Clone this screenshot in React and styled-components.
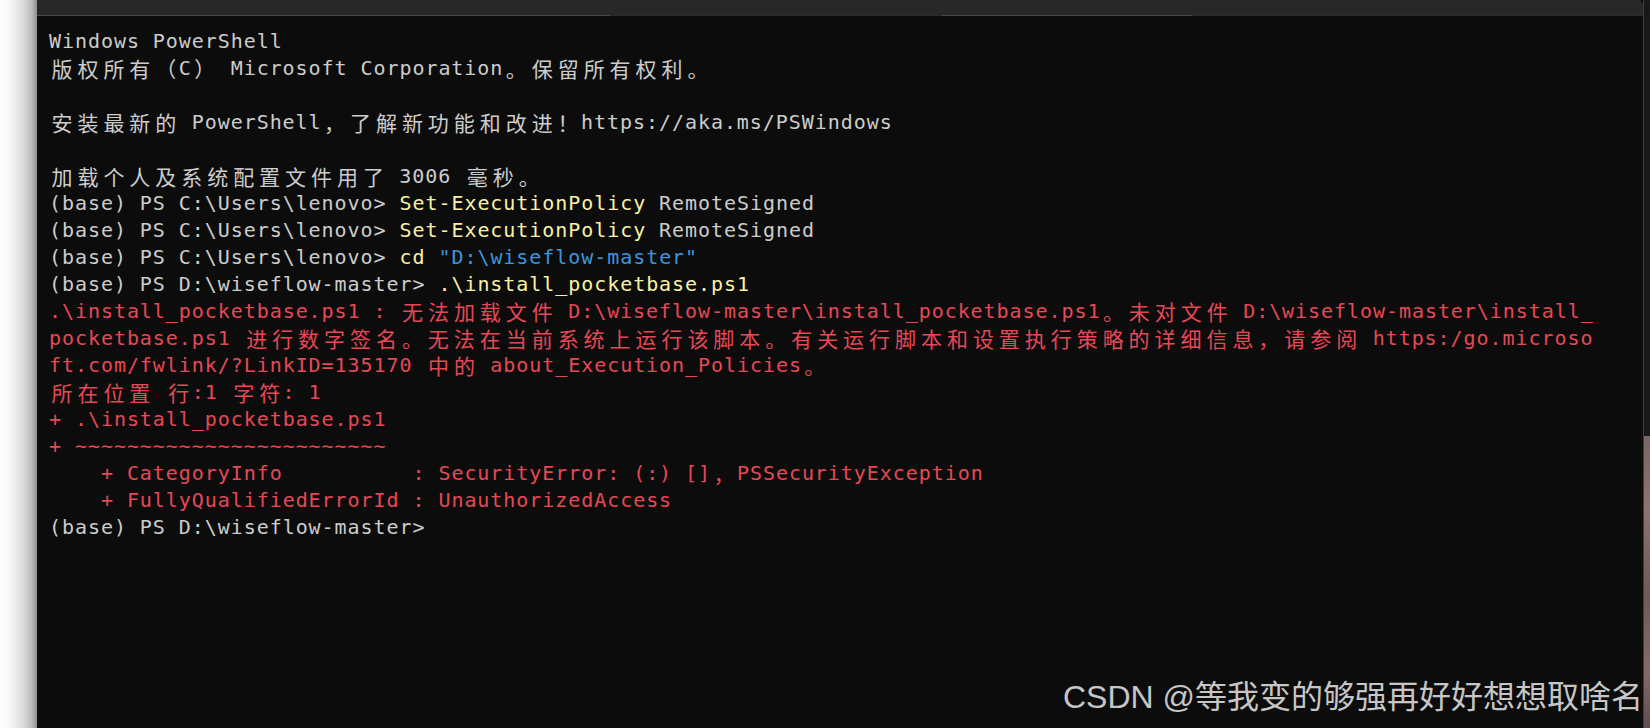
import React from 'react';
import styled, { createGlobalStyle } from 'styled-components';

const CELL = 12.98;
const LINE = 27.05;

const palette = {
  fg: '#cccccc',
  cmd: '#f9f1a5',
  str: '#3a96dd',
  err: '#e74856',
};

const Global = createGlobalStyle`
  html, body { margin: 0; padding: 0; background: #0c0c0c; }
  body { width: 1650px; height: 728px; overflow: hidden; }
`;

const Page = styled.div`
  display: flex;
  width: 1650px;
  height: 728px;
  overflow: hidden;
`;

const Backdrop = styled.div`
  flex: 0 0 37px;
  background: linear-gradient(
    to right,
    #ffffff 0px,
    #f7f7f7 10px,
    #dcdcdc 23px,
    #b9b9b9 32px,
    #8f8f8f 37px
  );
`;

const Window = styled.section`
  position: relative;
  flex: 1;
  min-width: 0;
  display: flex;
  flex-direction: column;
  background: #0c0c0c;
`;

const TitleBar = styled.div`
  height: 15px;
  background: #282828;
  border-top-right-radius: 5px;
`;

const TabRule = styled.div`
  display: flex;
  height: 1px;
  background: #2c2c2c;
`;

const RuleSeg = styled.span`
  flex: 0 0 ${(p) => p.$w}px;
  background: ${(p) => (p.$lit ? '#4a4a4a' : 'transparent')};
`;

const Console = styled.pre`
  margin: 0;
  padding: 11.5px 0 0 12px;
  font-family: 'DejaVu Sans Mono', 'Liberation Mono', monospace;
  font-size: 20px;
  letter-spacing: ${CELL - 20 * 0.602}px;
  color: ${palette.fg};
  white-space: pre;
`;

const Line = styled.div`
  height: ${LINE}px;
  line-height: ${LINE}px;
`;

const Tone = styled.span`
  color: ${(p) => palette[p.$tone] || palette.fg};
`;

const Wide = styled.span`
  display: inline-block;
  width: ${CELL * 2}px;
  text-align: center;
  font-family: 'Noto Sans CJK SC', 'Noto Sans CJK JP', sans-serif;
  font-size: 21px;
  letter-spacing: 0;
  line-height: 20px;
  vertical-align: -2px;
`;

const Watermark = styled.div`
  position: absolute;
  right: 0;
  bottom: 15px;
  font-family: 'Liberation Sans', 'Noto Sans CJK SC', sans-serif;
  font-size: 32px;
  line-height: 32px;
  color: #c6c6c6;
  white-space: nowrap;
`;

const Edge = styled.aside`
  flex: 0 0 7px;
  display: flex;
  flex-direction: column;
  border-left: 1px solid #3c3c3c;
  box-sizing: border-box;
`;

const EdgeTop = styled.div`
  flex: 0 0 436px;
  background: #181818;
`;

const EdgePhoto = styled.div`
  flex: 1;
  background: linear-gradient(
    180deg,
    #7a6464 0%,
    #8c7373 25%,
    #6e5858 55%,
    #846b6b 80%,
    #5f4c4c 100%
  );
`;

const WIDE_RE = /[\u1100-\u115f\u2e80-\u303f\u3040-\ua4cf\uac00-\ud7a3\uf900-\ufaff\ufe30-\ufe4f\uff00-\uff60\uffe0-\uffe6]/;

function renderCells(text) {
  const out = [];
  let buf = '';
  let k = 0;
  for (const ch of text) {
    if (WIDE_RE.test(ch)) {
      if (buf) {
        out.push(buf);
        buf = '';
      }
      out.push(<Wide key={k++}>{ch}</Wide>);
    } else {
      buf += ch;
    }
  }
  if (buf) out.push(buf);
  return out;
}

const PROMPT_C = '(base) PS C:\\Users\\lenovo> ';
const PROMPT_D = '(base) PS D:\\wiseflow-master> ';

const lines = [
  [['Windows PowerShell']],
  [['版权所有（C） Microsoft Corporation。保留所有权利。']],
  [],
  [['安装最新的 PowerShell，了解新功能和改进！https://aka.ms/PSWindows']],
  [],
  [['加载个人及系统配置文件用了 3006 毫秒。']],
  [[PROMPT_C], ['Set-ExecutionPolicy', 'cmd'], [' RemoteSigned']],
  [[PROMPT_C], ['Set-ExecutionPolicy', 'cmd'], [' RemoteSigned']],
  [[PROMPT_C], ['cd', 'cmd'], [' '], ['"D:\\wiseflow-master"', 'str']],
  [[PROMPT_D], ['.\\install_pocketbase.ps1', 'cmd']],
  [['.\\install_pocketbase.ps1 : 无法加载文件 D:\\wiseflow-master\\install_pocketbase.ps1。未对文件 D:\\wiseflow-master\\install_', 'err']],
  [['pocketbase.ps1 进行数字签名。无法在当前系统上运行该脚本。有关运行脚本和设置执行策略的详细信息，请参阅 https:/go.microso', 'err']],
  [['ft.com/fwlink/?LinkID=135170 中的 about_Execution_Policies。', 'err']],
  [['所在位置 行:1 字符: 1', 'err']],
  [['+ .\\install_pocketbase.ps1', 'err']],
  [['+ ~~~~~~~~~~~~~~~~~~~~~~~~', 'err']],
  [['    + CategoryInfo          : SecurityError: (:) []，PSSecurityException', 'err']],
  [['    + FullyQualifiedErrorId : UnauthorizedAccess', 'err']],
  [['(base) PS D:\\wiseflow-master>']],
];

export default function App() {
  return (
    <>
      <Global />
      <Page>
        <Backdrop />
        <Window>
          <TitleBar />
          <TabRule>
            <RuleSeg $w={573} $lit />
            <RuleSeg $w={332} />
            <RuleSeg $w={250} $lit />
          </TabRule>
          <Console>
            {lines.map((segs, i) => (
              <Line key={i}>
                {segs.map(([text, tone], j) => (
                  <Tone key={j} $tone={tone}>
                    {renderCells(text)}
                  </Tone>
                ))}
              </Line>
            ))}
          </Console>
          <Watermark>CSDN @等我变的够强再好好想想取啥名</Watermark>
        </Window>
        <Edge>
          <EdgeTop />
          <EdgePhoto />
        </Edge>
      </Page>
    </>
  );
}
